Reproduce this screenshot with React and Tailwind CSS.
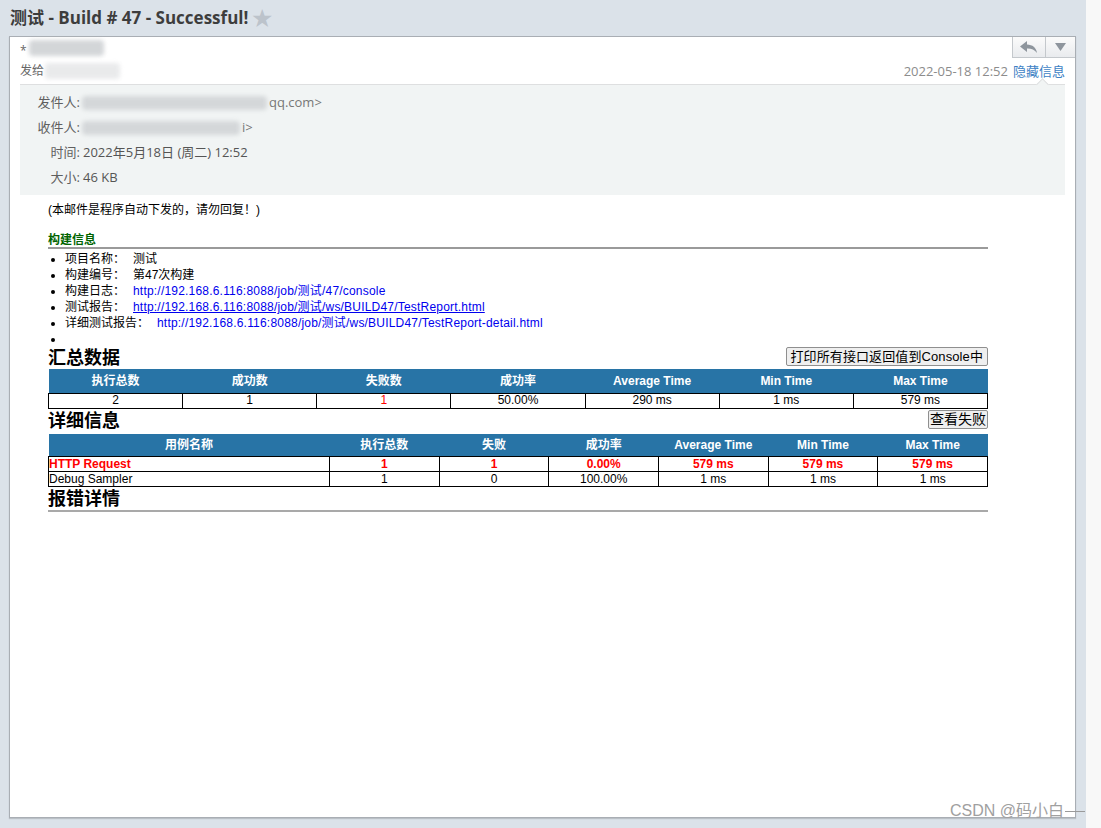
import React from "react";

const cjk = '"Liberation Sans", "Noto Sans CJK SC", sans-serif';
const ui = '"Open Sans", "Noto Sans CJK SC", sans-serif';

const summaryHead = ["执行总数", "成功数", "失败数", "成功率", "Average Time", "Min Time", "Max Time"];
const summaryRow = ["2", "1", "1", "50.00%", "290 ms", "1 ms", "579 ms"];

const detailHead = ["用例名称", "执行总数", "失败", "成功率", "Average Time", "Min Time", "Max Time"];
const detailRows = [
  { fail: true, cells: ["HTTP Request", "1", "1", "0.00%", "579 ms", "579 ms", "579 ms"] },
  { fail: false, cells: ["Debug Sampler", "1", "0", "100.00%", "1 ms", "1 ms", "1 ms"] },
];

const buildInfo = [
  { label: "项目名称：", value: "测试" },
  { label: "构建编号：", value: "第47次构建" },
  { label: "构建日志：", link: "http://192.168.6.116:8088/job/测试/47/console" },
  { label: "测试报告：", link: "http://192.168.6.116:8088/job/测试/ws/BUILD47/TestReport.html", underline: true },
  { label: "详细测试报告：", link: "http://192.168.6.116:8088/job/测试/ws/BUILD47/TestReport-detail.html", gap: true },
];

function Blur({ className }) {
  return <div className={"rounded-sm bg-[#c9cccf] blur-[2px] " + className} />;
}

function InfoRow({ label, children }) {
  return (
    <div className="flex items-center h-[25px]">
      <div className="w-[60px] text-right text-[#5f5f5f]">{label}</div>
      <div className="pl-[2px] flex items-center text-[#555]">{children}</div>
    </div>
  );
}

function OldButton({ children, className = "" }) {
  return (
    <button
      className={
        "h-[19px] bg-[#efefef] border border-[#8f8f8f] rounded-[2px] leading-[16px] text-black " +
        className
      }
      style={{ fontFamily: cjk }}
    >
      {children}
    </button>
  );
}

export default function App() {
  return (
    <div className="flex w-[1101px] h-[828px] overflow-hidden">
      <div className="w-[1086px] bg-[#dbe2e9] flex flex-col">
        <div className="h-[36px] pl-[10px] flex items-center gap-[3px]">
          <span className="text-[17px] font-bold text-[#3d3d3d]" style={{ fontFamily: ui }}>
            测试 - Build # 47 - Successful!
          </span>
          <span className="text-[25px] leading-none text-[#bcc3cb] mt-[-2px]">★</span>
        </div>

        <div className="ml-[9px] w-[1067px] h-[782px] bg-white border border-[#a9aeb4] shadow-[0_1px_1px_rgba(0,0,0,0.15)] flex flex-col">
          {/* sender header */}
          <div className="relative h-[47px]" style={{ fontFamily: ui }}>
            <div className="absolute left-[10px] top-[5px] text-[12px] text-[#666]">*</div>
            <Blur className="absolute left-[19px] top-[3px] w-[75px] h-[16px] opacity-80" />
            <div className="absolute left-[10px] top-[25px] text-[12px] text-[#666]">发给</div>
            <Blur className="absolute left-[35px] top-[26px] w-[75px] h-[16px] opacity-40" />

            <div className="absolute right-0 top-0 flex h-[21px] border border-t-0 border-r-0 border-[#c4c8cc] bg-gradient-to-b from-[#fbfbfb] to-[#e9ebee]">
              <div className="w-[33px] flex items-center justify-center border-r border-[#c4c8cc]">
                <svg width="18" height="13" viewBox="0 0 18 13">
                  <path d="M7 0 L0 5.5 L7 11 L7 7.5 C11 7.3 14.5 8.5 17 12 C16.3 6.5 12.5 3.8 7 3.5 Z" fill="#8e959d" />
                </svg>
              </div>
              <div className="w-[29px] flex items-center justify-center">
                <svg width="11" height="8" viewBox="0 0 11 8">
                  <path d="M0 0 L11 0 L5.5 8 Z" fill="#8e959d" />
                </svg>
              </div>
            </div>

            <div className="absolute right-[10px] top-[25px] text-[13px] flex gap-[5px]">
              <span className="text-[#8c8c8c]">2022-05-18 12:52</span>
              <span className="text-[#3d7fc4]">隐藏信息</span>
            </div>
          </div>

          {/* info panel */}
          <div className="relative mx-[10px] h-[111px] bg-[#f1f4f4] border-t border-[#dedfe0] pt-[5px] text-[13px]" style={{ fontFamily: ui }}>
            <div className="absolute right-[18px] -top-[5px] w-[9px] h-[9px] rotate-45 bg-[#f1f4f4] border-l border-t border-[#dedfe0]" />
            <InfoRow label="发件人:">
              <Blur className="w-[185px] h-[14px] opacity-70" />
              <span className="ml-[2px] text-[#777]">qq.com&gt;</span>
            </InfoRow>
            <InfoRow label="收件人:">
              <Blur className="w-[158px] h-[14px] opacity-70" />
              <span className="ml-[2px] text-[#777]">i&gt;</span>
            </InfoRow>
            <InfoRow label="时间:">
              <span className="ml-[1px]">2022年5月18日 (周二) 12:52</span>
            </InfoRow>
            <InfoRow label="大小:">
              <span className="ml-[1px]">46 KB</span>
            </InfoRow>
          </div>

          {/* body */}
          <div className="pl-[38px] w-[978px] text-[12px] leading-[16px] text-black" style={{ fontFamily: cjk }}>
            <p className="mt-[7px] h-[16px]">(本邮件是程序自动下发的，请勿回复！)</p>

            <div className="mt-[14px] font-bold text-[#006400] h-[16px]">构建信息</div>
            <div className="border-t-2 border-[#9a9a9a] h-0 mt-[-1px]" />

            <ul className="list-disc pl-[17px] mt-[2px]">
              {buildInfo.map((it) => (
                <li key={it.label} className="h-[16px]">
                  <span className={"inline-block " + (it.gap ? "w-[92px]" : "w-[68px]")}>{it.label}</span>
                  {it.value && <span>{it.value}</span>}
                  {it.link && (
                    <span className={"tracking-[0.2px] text-[#0000ee] " + (it.underline ? "underline" : "")}>{it.link}</span>
                  )}
                </li>
              ))}
              <li className="h-[16px]" />
            </ul>

            <div className="flex items-end justify-between h-[22px]">
              <h2 className="text-[18px] leading-[22px] font-bold">汇总数据</h2>
              <OldButton className="mb-[3px] text-[13px] h-[18px] px-[4px] tracking-[0.1px]">打印所有接口返回值到Console中</OldButton>
            </div>
            <table className="w-[940px] border-collapse table-fixed text-center">
              <thead>
                <tr className="bg-[#2874a6] text-white font-bold h-[24px]">
                  {summaryHead.map((h) => (
                    <th key={h} className="font-bold">{h}</th>
                  ))}
                </tr>
              </thead>
              <tbody>
                <tr className="h-[15px]">
                  {summaryRow.map((c, i) => (
                    <td key={i} className={"border border-black leading-[13px] " + (i === 2 ? "text-[#ff0000]" : "")}>
                      {c}
                    </td>
                  ))}
                </tr>
              </tbody>
            </table>

            <div className="flex items-start justify-between h-[25px]">
              <h2 className="text-[18px] leading-[22px] mt-[1px] font-bold">详细信息</h2>
              <OldButton className="mt-[1px] text-[14px] px-[1px]">查看失败</OldButton>
            </div>
            <table className="w-[940px] border-collapse table-fixed text-center">
              <thead>
                <tr className="bg-[#2874a6] text-white h-[23px]">
                  {detailHead.map((h, i) => (
                    <th key={h} className={"font-bold " + (i === 0 ? "w-[281px]" : "")}>{h}</th>
                  ))}
                </tr>
              </thead>
              <tbody>
                {detailRows.map((r) => (
                  <tr key={r.cells[0]} className="h-[15px]">
                    {r.cells.map((c, i) => (
                      <td
                        key={i}
                        className={
                          "border border-black leading-[13px] " +
                          (i === 0 ? "text-left " : "") +
                          (r.fail ? "text-[#ff0000] font-bold" : "")
                        }
                      >
                        {c}
                      </td>
                    ))}
                  </tr>
                ))}
              </tbody>
            </table>

            <h2 className="text-[18px] leading-[22px] mt-[1px] font-bold">报错详情</h2>
            <div className="w-[940px] border-t-2 border-[#a9a9a9]" />
          </div>

          <div className="flex-1" />
          <div className="flex justify-end items-center h-[16px] mb-[-2px] mr-[-10px]">
            <span className="text-[16px] text-[#a0a0a0] leading-none" style={{ fontFamily: cjk }}>
              CSDN @码小白
            </span>
            <span className="w-[20px] h-px bg-[#9a9a9a] ml-[1px]" />
          </div>
        </div>
      </div>
      <div className="flex-1 bg-[#f8f8f8]" />
    </div>
  );
}
